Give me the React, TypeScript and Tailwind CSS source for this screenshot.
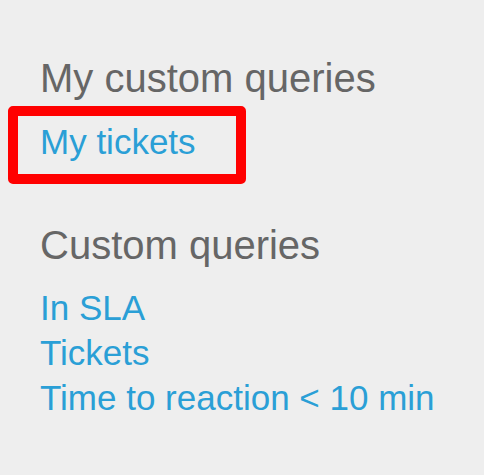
export default function App() {
  return (
    <div className="relative w-[484px] h-[475px] bg-[#eeeeee] overflow-hidden" style={{ fontFamily: '"Liberation Sans", Arial, sans-serif' }}>
      <div className="pl-[40px] pt-[56px] flex flex-col">
        <h2 className="text-[40px] leading-[44px] text-[#666666] font-normal">My custom queries</h2>
        <div className="mt-[19px] flex flex-col text-[35px] leading-[45px] text-[#2a9fd6]">
          <a>My tickets</a>
        </div>
        <h2 className="mt-[59px] text-[40px] leading-[44px] text-[#666666] font-normal">Custom queries</h2>
        <div className="mt-[18px] flex flex-col text-[35px] leading-[45px] text-[#2a9fd6]">
          <a>In SLA</a>
          <a>Tickets</a>
          <a>Time to reaction &lt; 10 min</a>
        </div>
      </div>
      <div className="absolute left-[8px] top-[106px] w-[238px] h-[78px] border-[10px] border-[#ff0000] rounded-[5px]" />
    </div>
  );
}
